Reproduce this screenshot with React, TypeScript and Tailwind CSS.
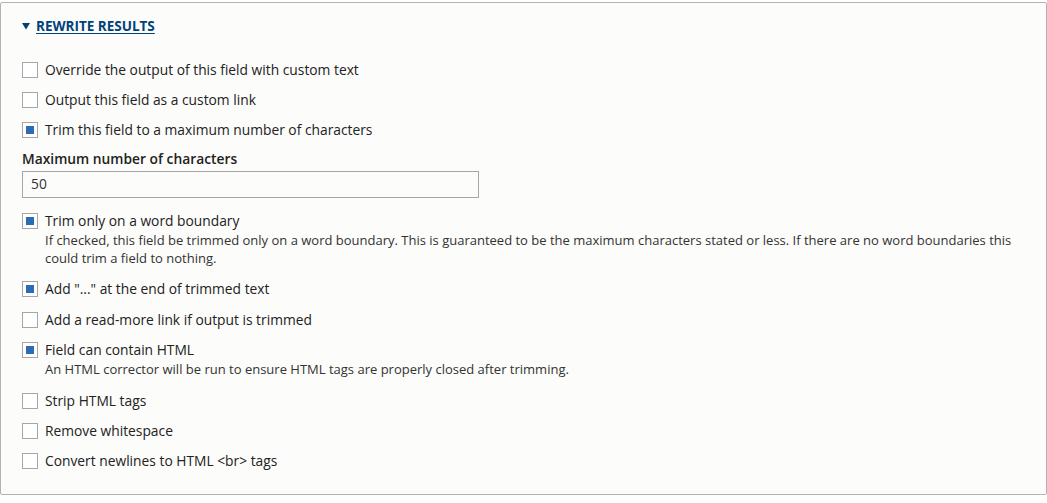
import React from 'react'

type Option = {
    label: string
    checked?: boolean
    description?: string
}

function Checkbox({ checked }: { checked?: boolean }): JSX.Element {
    return (
        <span className="flex h-[16px] w-[16px] shrink-0 items-center justify-center border border-[#a6a6a6] bg-white">
            {checked && <span className="h-[8px] w-[8px] bg-[#2c6cb5]" />}
        </span>
    )
}

function CheckRow({ label, checked, description }: Option): JSX.Element {
    return (
        <div className="flex flex-col">
            <label className="flex h-[16px] items-center gap-[7px]">
                <Checkbox checked={checked} />
                <span className="text-[13.8px] leading-[16px] text-[#222]">{label}</span>
            </label>
            {description && (
                <p className="mt-[2px] pl-[23px] pr-[20px] text-[13px] leading-[18px] text-[#333]">{description}</p>
            )}
        </div>
    )
}

const top: Option[] = [
    { label: 'Override the output of this field with custom text' },
    { label: 'Output this field as a custom link' },
    { label: 'Trim this field to a maximum number of characters', checked: true },
]

export default function App(): JSX.Element {
    return (
        <div className="h-[503px] w-[1047px] bg-white pt-[2px]" style={{ fontFamily: '"Open Sans", sans-serif' }}>
            <div className="h-[493px] w-[1047px] rounded-[2px] border border-[#b3b3b3] bg-[#fcfcfa] pl-[21px]">
                <div className="flex h-[44px] items-center gap-[6px] pt-[2px]">
                    <svg width="8" height="8" viewBox="0 0 8 8" className="text-[#003f6e]">
                        <path d="M0 1 L8 1 L4 7.5 Z" fill="currentColor" />
                    </svg>
                    <span className="text-[13.5px] font-bold uppercase leading-[16px] text-[#00427a] underline decoration-1 underline-offset-2">
                        Rewrite results
                    </span>
                </div>

                <div className="mt-[15px] flex flex-col gap-[14px]">
                    {top.map((o) => (
                        <CheckRow key={o.label} {...o} />
                    ))}
                </div>

                <div className="mt-[12px]">
                    <div className="text-[13.8px] font-semibold leading-[18px] text-[#222]">Maximum number of characters</div>
                    <div className="mt-[3px] flex h-[27px] w-[457px] items-center border border-[#a6a6a6] bg-[#fcfcfa] px-[8px] text-[13.8px] text-[#333]">
                        50
                    </div>
                </div>

                <div className="mt-[15px] flex flex-col gap-[14px]">
                    <CheckRow
                        label="Trim only on a word boundary"
                        checked
                        description="If checked, this field be trimmed only on a word boundary. This is guaranteed to be the maximum characters stated or less. If there are no word boundaries this could trim a field to nothing."
                    />
                    <CheckRow label={'Add "..." at the end of trimmed text'} checked />
                    <div className="mt-[1px]">
                        <CheckRow label="Add a read-more link if output is trimmed" />
                    </div>
                    <CheckRow
                        label="Field can contain HTML"
                        checked
                        description="An HTML corrector will be run to ensure HTML tags are properly closed after trimming."
                    />
                    <div className="mt-[1px] flex flex-col gap-[14px]">
                        <CheckRow label="Strip HTML tags" />
                        <CheckRow label="Remove whitespace" />
                        <CheckRow label="Convert newlines to HTML <br> tags" />
                    </div>
                </div>
            </div>
        </div>
    )
}
